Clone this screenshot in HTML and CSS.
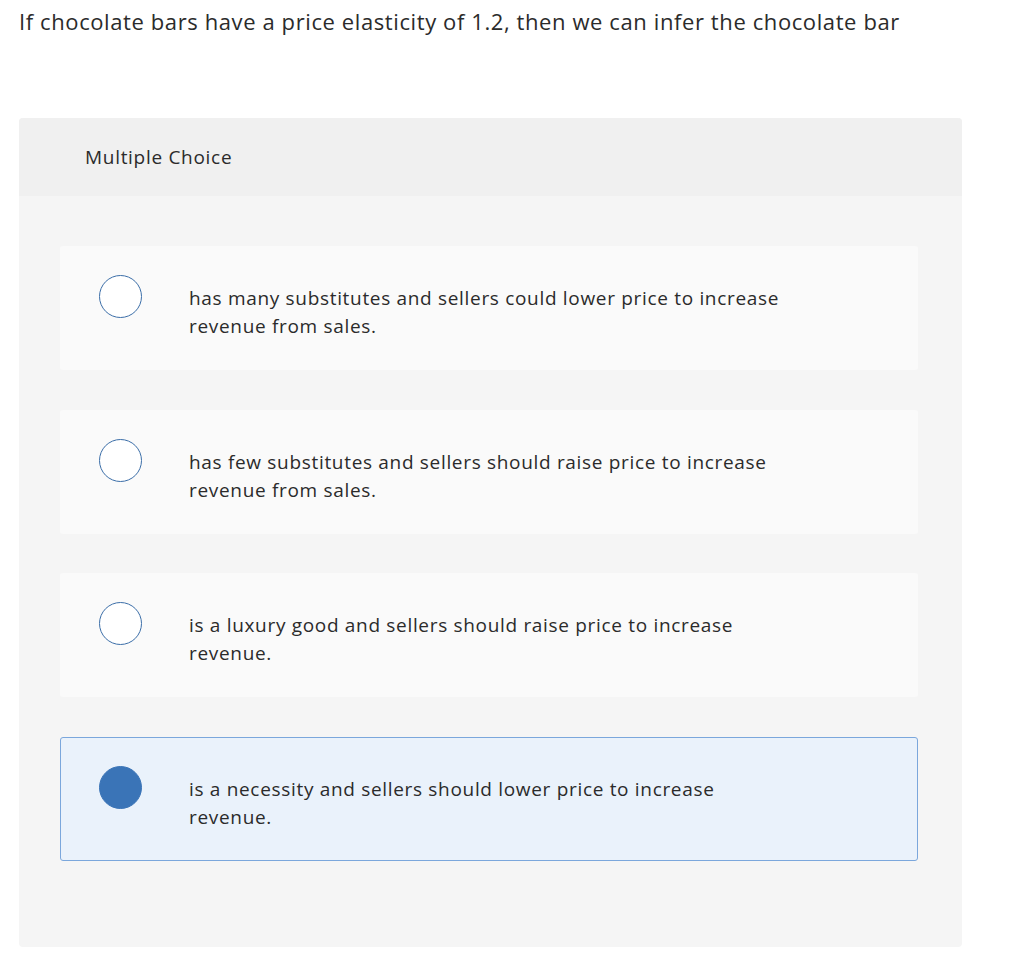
FILE: index.html
```html
<!DOCTYPE html>
<html>
<head>
<meta charset="utf-8">
<link rel="stylesheet" href="styles.css">
</head>
<body>
<p class="question">If chocolate bars have a price elasticity of 1.2, then we can infer the chocolate bar</p>
<div class="panel">
  <div class="panel-head">Multiple Choice</div>
  <div class="panel-body">
    <div class="option">
      <span class="radio"></span>
      <span class="label">has many substitutes and sellers could lower price to increase<br>revenue from sales.</span>
    </div>
    <div class="option">
      <span class="radio"></span>
      <span class="label">has few substitutes and sellers should raise price to increase<br>revenue from sales.</span>
    </div>
    <div class="option">
      <span class="radio"></span>
      <span class="label">is a luxury good and sellers should raise price to increase<br>revenue.</span>
    </div>
    <div class="option selected">
      <span class="radio"></span>
      <span class="label">is a necessity and sellers should lower price to increase<br>revenue.</span>
    </div>
  </div>
</div>
</body>
</html>
```
FILE: styles.css
```css
body {
  margin: 0;
  background: #ffffff;
  font-family: "Open Sans", "Liberation Sans", sans-serif;
  color: #2b2b2b;
}
.question {
  margin: 0;
  padding: 7px 0 0 19px;
  font-size: 22px;
  letter-spacing: 0.6px;
  line-height: 28px;
}
.panel {
  margin: 83px 0 0 19px;
  width: 943px;
  border-radius: 4px;
  overflow: hidden;
  background: #f5f5f5;
}
.panel-head {
  height: 78px;
  background: #f0f0f0;
  display: flex;
  align-items: center;
  padding-left: 66px;
  font-size: 19px;
  letter-spacing: 0.7px;
}
.panel-body {
  padding: 50px 44px 86px 41px;
  display: flex;
  flex-direction: column;
  gap: 39.7px;
}
.option {
  height: 124px;
  box-sizing: border-box;
  background: #fafafa;
  border-radius: 3px;
  display: flex;
  align-items: flex-start;
  padding: 29px 0 0 39px;
}
.option.selected {
  background: #eaf2fb;
  border: 1px solid #7ba7dc;
  padding: 28px 0 0 38px;
}
.radio {
  width: 41px;
  height: 41px;
  border: 1px solid #3b6ea8;
  border-radius: 50%;
  background: #fff;
  flex: none;
}
.selected .radio {
  background: #3a74b7;
  border-color: #3a74b7;
}
.label {
  margin: 9px 0 0 47px;
  font-size: 19px;
  letter-spacing: 0.68px;
  line-height: 28px;
}
```
